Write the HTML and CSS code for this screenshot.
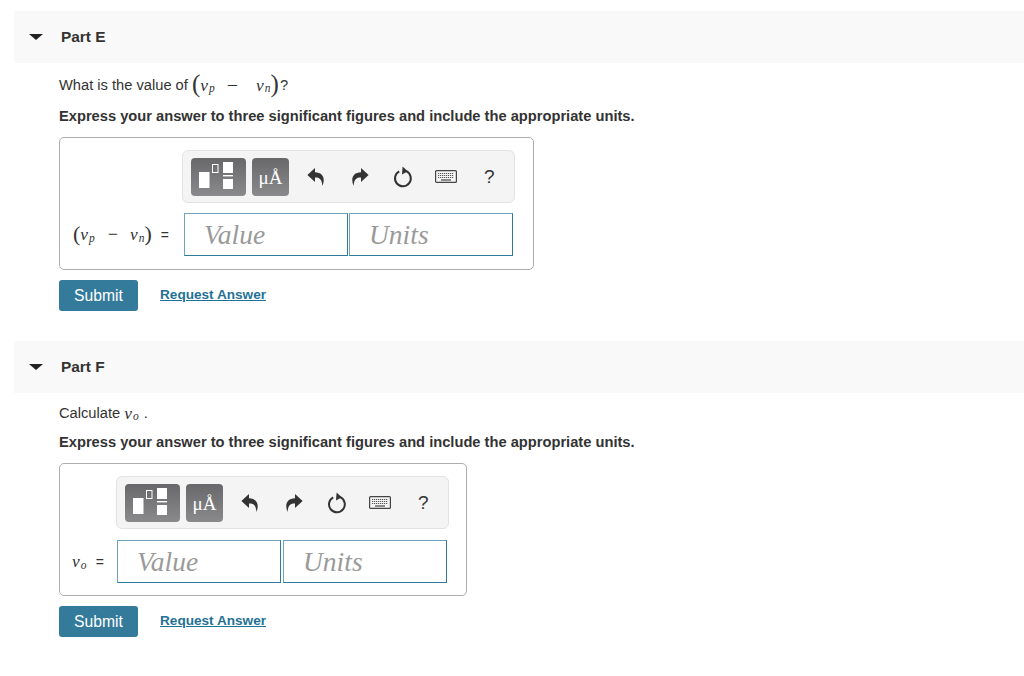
FILE: index.html
```html
<!DOCTYPE html>
<html lang="en">
<head>
<meta charset="utf-8">
<title>Parts E and F</title>
<link rel="stylesheet" href="styles.css">
</head>
<body>
<svg class="defs" width="0" height="0" aria-hidden="true">
  <symbol id="i-undo" viewBox="0 0 18 20"><path d="M8 1 0.4 8 8 15 8 10.4C12 10.2 15 11.6 15.4 19 18.6 11.5 16 5.4 8 5.2Z"/></symbol>
  <symbol id="i-reset" viewBox="0 0 20 22"><path d="M6.2 5.4A7.9 7.9 0 1 0 13.2 5.2" fill="none" stroke="currentColor" stroke-width="2"/><path d="M9.6 0.6 14.8 5.2 9 8.6Z"/></symbol>
  <symbol id="i-kbd" viewBox="0 0 22 13"><rect x="0.6" y="0.6" width="20.8" height="11.8" rx="1" fill="#f4f4f4" stroke="#444" stroke-width="1.2"/><path d="M3 3.5H19M3 5.5H19M3 7.5H19" stroke="#555" stroke-width="1.2" stroke-dasharray="1.2 .8"/><path d="M6 10H16" stroke="#444" stroke-width="1.2"/></symbol>
  <symbol id="i-tpl" viewBox="0 0 55 38"><rect x="8" y="14" width="10.5" height="16" fill="#fff"/><rect x="21.5" y="6.5" width="5.5" height="8" fill="none" stroke="#fff"/><rect x="32" y="4" width="10" height="11" fill="#fff"/><rect x="32" y="17" width="10" height="1.4" fill="#fff"/><rect x="32" y="21" width="10" height="10" fill="#fff"/></symbol>
</svg>

<section class="part">
  <header class="part-head"><span class="caret"></span><h2 class="part-title">Part E</h2></header>
  <div class="part-body">
    <p class="question">What is the value of <span class="math math-big"><span class="paren">(</span><i class="v">v</i><sub>p</sub><span class="minus">−</span><i class="v">v</i><sub>n</sub><span class="paren">)</span></span>?</p>
    <p class="instruction">Express your answer to three significant figures and include the appropriate units.</p>
    <div class="answer-box">
      <div class="label label-e"><span class="math"><span class="paren paren-sm">(</span><i class="v">v</i><sub>p</sub><span class="minus minus-sm">−</span><i class="v">v</i><sub>n</sub><span class="paren paren-sm">)</span></span><span class="equals">=</span></div>
      <div class="editor">
        <div class="toolbar">
          <button class="tool tool-tpl" type="button" aria-label="Templates"><svg class="tpl"><use href="#i-tpl"/></svg></button>
          <button class="tool tool-unit" type="button">μÅ</button>
          <svg class="ico ico-undo"><use href="#i-undo"/></svg>
          <svg class="ico ico-redo"><use href="#i-undo"/></svg>
          <svg class="ico ico-reset"><use href="#i-reset"/></svg>
          <svg class="ico-kbd"><use href="#i-kbd"/></svg>
          <span class="help">?</span>
        </div>
        <div class="inputs">
          <input class="field" type="text" placeholder="Value">
          <input class="field" type="text" placeholder="Units">
        </div>
      </div>
    </div>
    <div class="actions"><button class="submit" type="button">Submit</button><a class="request" href="#">Request Answer</a></div>
  </div>
</section>

<section class="part part-f">
  <header class="part-head"><span class="caret"></span><h2 class="part-title">Part F</h2></header>
  <div class="part-body">
    <p class="question question-f">Calculate <span class="math"><i class="v">v</i><sub>o</sub></span> .</p>
    <p class="instruction instruction-f">Express your answer to three significant figures and include the appropriate units.</p>
    <div class="answer-box answer-box-f">
      <div class="label label-f"><span class="math"><i class="v">v</i><sub>o</sub></span><span class="equals">=</span></div>
      <div class="editor">
        <div class="toolbar">
          <button class="tool tool-tpl" type="button" aria-label="Templates"><svg class="tpl"><use href="#i-tpl"/></svg></button>
          <button class="tool tool-unit" type="button">μÅ</button>
          <svg class="ico ico-undo"><use href="#i-undo"/></svg>
          <svg class="ico ico-redo"><use href="#i-undo"/></svg>
          <svg class="ico ico-reset"><use href="#i-reset"/></svg>
          <svg class="ico-kbd"><use href="#i-kbd"/></svg>
          <span class="help">?</span>
        </div>
        <div class="inputs">
          <input class="field" type="text" placeholder="Value">
          <input class="field" type="text" placeholder="Units">
        </div>
      </div>
    </div>
    <div class="actions"><button class="submit" type="button">Submit</button><a class="request" href="#">Request Answer</a></div>
  </div>
</section>
</body>
</html>
```

FILE: styles.css
```css
* { box-sizing: border-box; }
html, body { margin: 0; padding: 0; }
body {
  background: #fff;
  color: #333;
  font-family: "Liberation Sans", Arial, sans-serif;
  font-size: 14.68px;
  padding: 11px 0 0 14px;
  overflow: hidden;
}
.defs { position: absolute; }
.part-head {
  display: flex;
  align-items: center;
  height: 52px;
  background: #f9f9f9;
  padding-left: 15px;
}
.caret {
  width: 0;
  height: 0;
  border-left: 7px solid transparent;
  border-right: 7px solid transparent;
  border-top: 6.5px solid #222;
  margin-right: 18px;
}
.part-title {
  margin: 0;
  font-size: 15.4px;
  font-weight: bold;
  line-height: 18px;
}
.part-body { padding-left: 45px; }
.question {
  margin: 10px 0 0;
  height: 24px;
  line-height: 24px;
  display: flex;
  align-items: center;
  white-space: pre;
}
.question-f { margin-top: 8px; }
.question .math { margin: 0 1px 0 0; }
.instruction {
  margin: 10px 0 0;
  font-weight: bold;
  line-height: 18px;
}
.instruction-f { margin-top: 8px; }
.math {
  display: inline-flex;
  align-items: center;
  font-family: "Liberation Serif", "Times New Roman", serif;
  color: #333;
  white-space: nowrap;
}
.math .v { font-size: 17.5px; font-style: italic; }
.math sub { font-size: 11.5px; font-style: italic; position: relative; top: 3px; vertical-align: baseline; margin-left: 1px; }
.paren { font-size: 25px; line-height: 24px; font-weight: normal; position: relative; top: -1px; }
.paren-sm { font-size: 22px; }
.minus { margin: 0 18px 0 12px; font-size: 20px; font-family: "Liberation Serif", serif; font-weight: normal; }
.minus-sm { margin: 0 12px 0 13px; font-size: 18px; }
.answer-box {
  margin-top: 12px;
  width: 475px;
  height: 133px;
  border: 1px solid #aeaeae;
  border-radius: 5px;
  padding: 12px 0 13px 12px;
  display: flex;
  align-items: flex-end;
  gap: 12px;
}
.answer-box-f { width: 408px; padding-bottom: 12px; }
.label {
  height: 43px;
  display: flex;
  align-items: center;
  justify-content: space-between;
  flex: 0 0 auto;
}
.label-e { width: 98px; padding: 0 1px 0 1px; }
.label-f { width: 32px; }
.equals { font-size: 14px; }
.editor {
  width: 333px;
  flex: 0 0 auto;
  display: flex;
  flex-direction: column;
  gap: 10px;
}
.answer-box-f .editor { gap: 11px; }
.toolbar {
  height: 53px;
  background: #f4f4f4;
  border: 1px solid #e3e3e3;
  border-radius: 6px;
  display: flex;
  align-items: center;
  padding-left: 8px;
}
.tool {
  border: 0;
  padding: 0;
  height: 38px;
  border-radius: 4px;
  background: linear-gradient(#68686a, #8a8a8c);
  color: #fff;
  display: block;
}
.tool-tpl { width: 55px; margin-right: 6px; }
.tpl { display: block; width: 55px; height: 38px; }
.tool-unit {
  width: 37px;
  font-family: "Liberation Serif", serif;
  font-size: 19px;
  line-height: 38px;
  padding-top: 1px;
}
.ico { width: 18px; height: 20px; fill: #333; color: #333; flex: 0 0 auto; }
.ico-undo { margin-left: 18px; }
.ico-redo { margin-left: 26px; transform: scaleX(-1); }
.ico-reset { margin-left: 24px; width: 20px; height: 22px; }
.ico-kbd { margin-left: 22px; width: 22px; height: 13px; flex: 0 0 auto; }
.help { margin-left: 27px; font-size: 19px; color: #333; }
.inputs {
  display: flex;
  gap: 1px;
  padding-left: 2px;
}
.answer-box-f .inputs { gap: 2px; padding-left: 1px; }
.field {
  width: 164px;
  height: 43px;
  border: 1px solid #2f7a9b;
  border-top-color: #6fa4bc;
  border-left-color: #6fa4bc;
  background: #fff;
  padding: 0 0 0 19px;
  outline: none;
  font-family: "Liberation Serif", serif;
  font-style: italic;
  font-size: 27.5px;
  color: #999;
}
.field::placeholder { color: #9a9a9a; opacity: 1; }
.actions {
  margin-top: 10px;
  display: flex;
  align-items: center;
  gap: 22px;
}
.submit {
  width: 79px;
  height: 31px;
  border: 0;
  border-radius: 3px;
  background: #337a9b;
  color: #fff;
  font-family: "Liberation Sans", sans-serif;
  font-size: 15.7px;
  padding: 0;
}
.request {
  color: #1f7196;
  font-weight: bold;
  font-size: 13.6px;
  position: relative;
  top: -1px;
}
.part-f { margin-top: 30px; }
```
